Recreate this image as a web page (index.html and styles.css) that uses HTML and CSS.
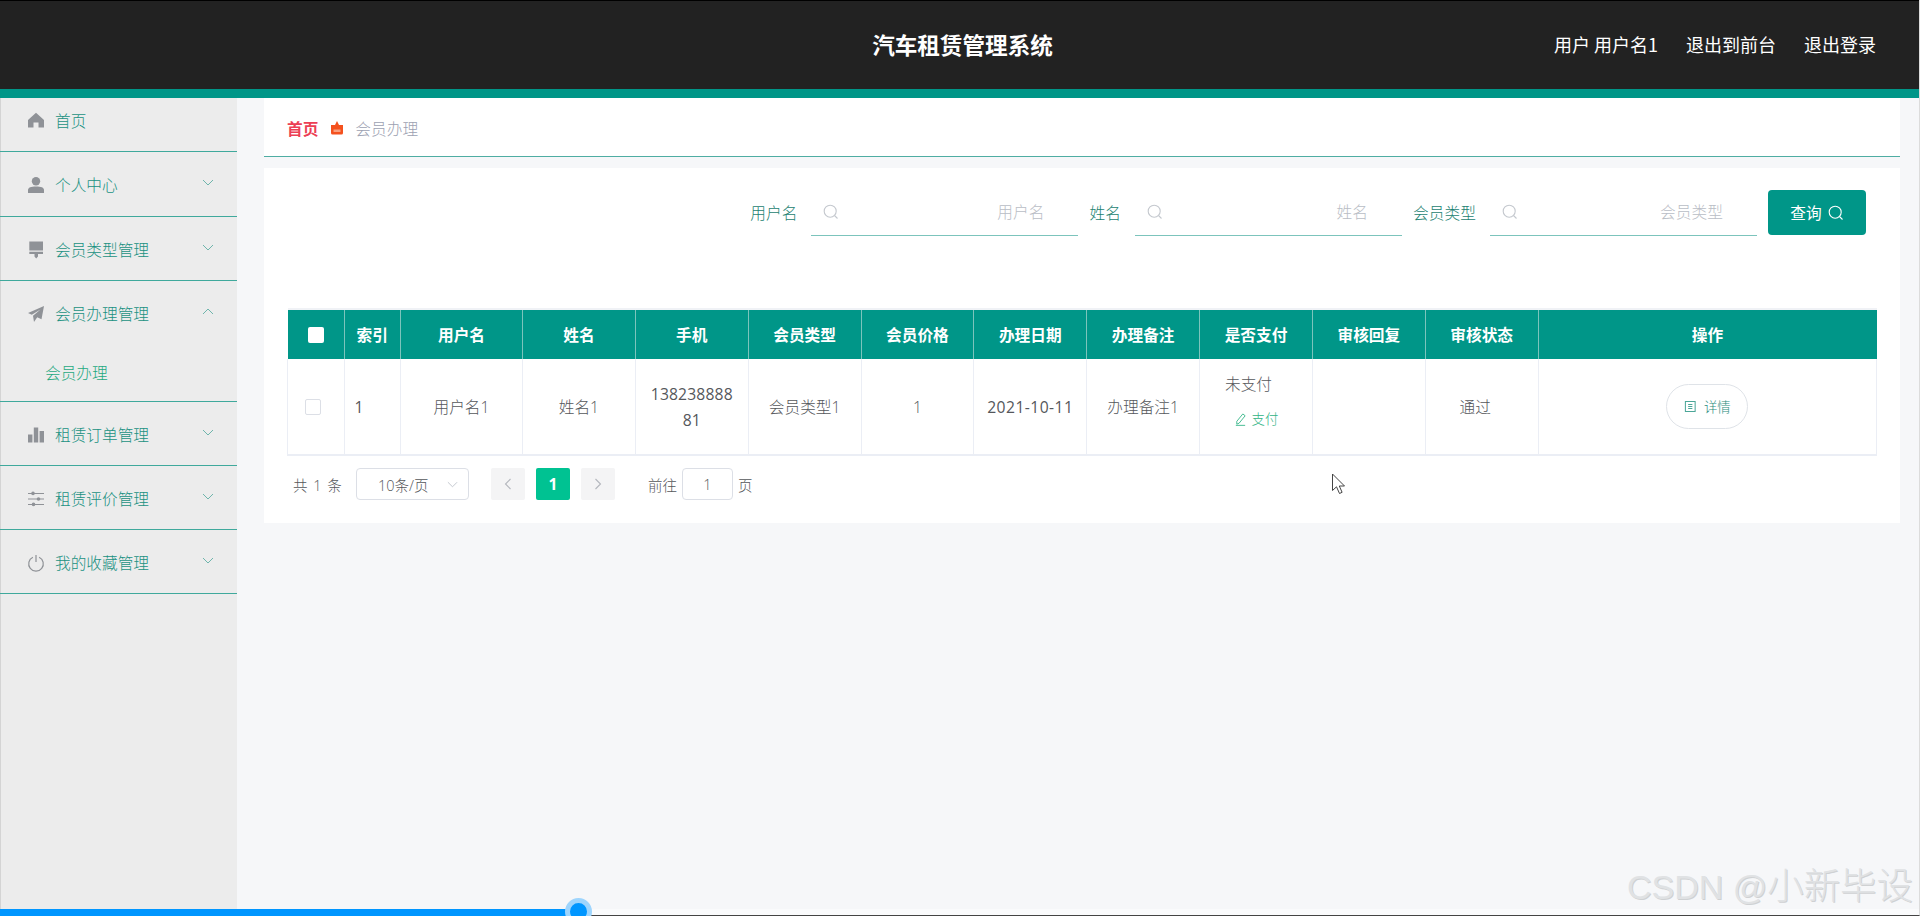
FILE: index.html
```html
<!DOCTYPE html>
<html lang="zh-CN">
<head>
<meta charset="utf-8">
<title>汽车租赁管理系统</title>
<link rel="stylesheet" href="styles.css">
</head>
<body>
<div class="app">
  <header class="topbar">
    <div class="title">汽车租赁管理系统</div>
    <nav class="top-links">
      <span>用户 用户名1</span>
      <span>退出到前台</span>
      <span>退出登录</span>
    </nav>
  </header>
  <div class="body-row">
    <aside class="sidebar">
      <div class="menu-item menu-home">
        <div class="menu-title">
          <svg class="menu-icon" viewBox="0 0 16 16"><path d="M8 0.8 L16 8 V15.5 H10.5 V10.5 H5.5 V15.5 H0 V8 Z"/></svg>
          <span>首页</span>
        </div>
      </div>
      <div class="menu-item menu-tall">
        <div class="menu-title">
          <svg class="menu-icon" viewBox="0 0 16 16"><circle cx="8" cy="4.2" r="4.2"/><path d="M0 16 V13 C0 10.5 3 9.5 8 9.5 C13 9.5 16 10.5 16 13 V16 Z"/></svg>
          <span>个人中心</span>
          <svg class="chev" viewBox="0 0 12 7"><path d="M1 1 L6 6 L11 1"/></svg>
        </div>
      </div>
      <div class="menu-item">
        <div class="menu-title">
          <svg class="menu-icon" viewBox="0 0 16 16"><path d="M1.3 -0.5 H15 V8.5 H1.3 Z M1.3 9.8 H15 V12 H10 V14.5 L8.2 16.5 L6.5 14.5 V12 H1.3 Z"/></svg>
          <span>会员类型管理</span>
          <svg class="chev" viewBox="0 0 12 7"><path d="M1 1 L6 6 L11 1"/></svg>
        </div>
      </div>
      <div class="menu-item">
        <div class="menu-title">
          <svg class="menu-icon" viewBox="0 0 16 16"><path d="M16 0 L13.5 13.2 L9.2 11.2 L6 16 L5 9.8 L12.5 3.5 L3.8 8.8 L0 7 Z"/></svg>
          <span>会员办理管理</span>
          <svg class="chev" viewBox="0 0 12 7"><path d="M1 6 L6 1 L11 6"/></svg>
        </div>
        <div class="submenu">会员办理</div>
      </div>
      <div class="menu-item">
        <div class="menu-title">
          <svg class="menu-icon" viewBox="0 0 16 16"><path d="M0 7.5 H4.4 V15.5 H0 Z M5.8 0.5 H10.2 V15.5 H5.8 Z M11.6 4 H16 V15.5 H11.6 Z"/></svg>
          <span>租赁订单管理</span>
          <svg class="chev" viewBox="0 0 12 7"><path d="M1 1 L6 6 L11 1"/></svg>
        </div>
      </div>
      <div class="menu-item">
        <div class="menu-title">
          <svg class="menu-icon" viewBox="0 0 16 16"><path d="M0 1.9 H16 V3 H0 Z M0 7.4 H16 V8.5 H0 Z M0 12.9 H16 V14 H0 Z"/><circle cx="5" cy="2.4" r="1.8"/><circle cx="10.5" cy="8" r="1.8"/><circle cx="5.5" cy="13.4" r="1.8"/></svg>
          <span>租赁评价管理</span>
          <svg class="chev" viewBox="0 0 12 7"><path d="M1 1 L6 6 L11 1"/></svg>
        </div>
      </div>
      <div class="menu-item">
        <div class="menu-title">
          <svg class="menu-icon" viewBox="0 0 16 16"><path class="power" d="M4.9 2.2 A7.3 7.3 0 1 0 11.1 2.2 M8 0 V7"/></svg>
          <span>我的收藏管理</span>
          <svg class="chev" viewBox="0 0 12 7"><path d="M1 1 L6 6 L11 1"/></svg>
        </div>
      </div>
    </aside>
    <main class="content">
      <div class="crumbs">
        <span class="crumb-home">首页</span>
        <svg class="crumb-icon" viewBox="0 0 14 14"><path d="M7 0 L9 4 H13 V12 Q13 13.5 11.5 13.5 H2.5 Q1 13.5 1 12 V4 H5 Z"/><path class="crumb-mark" d="M3.5 8.5 H10.5 V11 H3.5 Z"/></svg>
        <span class="crumb-page">会员办理</span>
      </div>
      <section class="card">
        <form class="search">
          <label class="s-label">用户名</label>
          <div class="s-input">
            <svg class="s-icon" viewBox="0 0 16 16"><circle cx="7.2" cy="7.2" r="6"/><path d="M11.5 11.5 L14.5 14.5"/></svg>
            <span class="s-ph">用户名</span>
          </div>
          <label class="s-label">姓名</label>
          <div class="s-input">
            <svg class="s-icon" viewBox="0 0 16 16"><circle cx="7.2" cy="7.2" r="6"/><path d="M11.5 11.5 L14.5 14.5"/></svg>
            <span class="s-ph">姓名</span>
          </div>
          <label class="s-label">会员类型</label>
          <div class="s-input">
            <svg class="s-icon" viewBox="0 0 16 16"><circle cx="7.2" cy="7.2" r="6"/><path d="M11.5 11.5 L14.5 14.5"/></svg>
            <span class="s-ph">会员类型</span>
          </div>
          <button class="s-btn" type="button">查询
            <svg class="s-btn-icon" viewBox="0 0 16 16"><circle cx="7.2" cy="7.2" r="6"/><path d="M11.5 11.5 L14.5 14.5"/></svg>
          </button>
        </form>
        <table class="grid">
          <colgroup>
            <col class="c-check"><col class="c-index"><col class="c-user"><col class="c-std"><col class="c-std"><col class="c-std"><col class="c-std"><col class="c-std"><col class="c-std"><col class="c-std"><col class="c-std"><col class="c-std"><col>
          </colgroup>
          <thead>
            <tr>
              <th><span class="check check-head"></span></th>
              <th>索引</th><th>用户名</th><th>姓名</th><th>手机</th><th>会员类型</th><th>会员价格</th><th>办理日期</th><th>办理备注</th><th>是否支付</th><th>审核回复</th><th>审核状态</th><th>操作</th>
            </tr>
          </thead>
          <tbody>
            <tr>
              <td><span class="check check-body"></span></td>
              <td class="left">1</td>
              <td>用户名1</td>
              <td>姓名1</td>
              <td class="wrap">13823888881</td>
              <td>会员类型1</td>
              <td>1</td>
              <td class="nums">2021-10-11</td>
              <td>办理备注1</td>
              <td>
                <div class="unpaid">未支付</div>
                <div class="pay">
                  <svg class="pay-icon" viewBox="0 0 14 14"><path d="M9.5 1 L12 3 L5.5 11 L3 12 L3 9 Z M2 13.3 H12"/></svg>支付
                </div>
              </td>
              <td></td>
              <td><span class="status">通过</span></td>
              <td>
                <span class="detail">
                  <svg class="detail-icon" viewBox="0 0 14 14"><path d="M1.5 1.5 H12 V12.5 H1.5 Z M4.5 4.8 H9 M4.5 7 H9 M4.5 9.2 H9"/></svg>详情
                </span>
              </td>
            </tr>
          </tbody>
        </table>
        <div class="pager">
          <span class="total">共 1 条</span>
          <span class="size">10条/页
            <svg class="size-chev" viewBox="0 0 12 7"><path d="M1 1 L6 6 L11 1"/></svg>
          </span>
          <span class="pbtn pbtn-prev"><svg viewBox="0 0 8 12"><path d="M6.5 1 L1.5 6 L6.5 11"/></svg></span>
          <span class="pnum">1</span>
          <span class="pbtn"><svg viewBox="0 0 8 12"><path d="M1.5 1 L6.5 6 L1.5 11"/></svg></span>
          <span class="goto">前往</span>
          <span class="jump">1</span>
          <span class="page-word">页</span>
        </div>
      </section>
    </main>
  </div>
</div>
<div class="watermark">CSDN @<span class="wm-cjk">小新毕设</span></div>
<svg class="cursor" viewBox="0 0 14 22"><path d="M1 1 V17.5 L5 13.8 L8 20.5 L10.6 19.3 L7.8 13 H13 Z"/></svg>
<div class="track"></div>
<div class="progress"></div>
<div class="thumb"></div>
</body>
</html>
```
FILE: styles.css
```css
* { box-sizing: border-box; }
html, body { margin: 0; padding: 0; height: 100%; overflow: hidden; }
body {
  font-family: "Noto Sans CJK SC", "Noto Sans", sans-serif;
  font-size: 15.68px;
  font-weight: 300;
  color: #55575b;
  background: #f6f7f9;
}
.app {
  height: 916px;
  display: flex;
  flex-direction: column;
  border-bottom: 1px solid #444;
  border-right: 1px solid #dcdcdc;
}
.topbar {
  height: 98px;
  flex: none;
  background: #222;
  border-top: 1px solid #000;
  border-bottom: 9px solid #009688;
  display: flex;
  align-items: center;
  justify-content: center;
  padding-bottom: 2px;
  position: relative;
}
.title { font-size: 22.6px; font-weight: 700; color: #fff; padding-left: 6px; }
.top-links {
  position: absolute;
  right: 43px;
  top: 29px;
  display: flex;
  gap: 28px;
  font-size: 18px;
  font-weight: 400;
  line-height: 28px;
  color: #fff;
}
.body-row { flex: 1; display: flex; min-height: 0; }
.sidebar {
  width: 237px;
  flex: none;
  background: #ececec;
  border-left: 1px solid #d4d4d4;
}
.menu-item { border-bottom: 1px solid #3fa99c; margin-left: -1px; }
.menu-title {
  height: 63px;
  display: flex;
  align-items: center;
  padding: 2px 0 0 28px;
  color: #1a9182;
}
.menu-home .menu-title { height: 53px; padding-top: 0; padding-bottom: 9px; }
.menu-tall .menu-title { height: 64px; padding-top: 1px; }
.menu-icon { width: 16px; height: 16px; fill: #8f9297; margin-right: 11px; flex: none; overflow: visible; }
.power { fill: none; stroke: #8f9297; stroke-width: 1.2; }
.chev {
  width: 12px;
  height: 7px;
  margin: 0 23px 5px auto;
  fill: none;
  stroke: #6fb5ac;
  stroke-width: 1;
}
.submenu {
  height: 57px;
  padding: 0 0 0 45px;
  line-height: 58px;
  color: #1ea97f;
}
.content { flex: 1; min-width: 0; padding: 0 19px 0 27px; }
.crumbs {
  height: 59px;
  background: #fff;
  border-bottom: 1px solid #4fada3;
  display: flex;
  align-items: center;
  padding: 2px 0 0 23px;
  margin-bottom: 11px;
}
.crumb-home { font-weight: 700; color: #ec3f55; }
.crumb-icon { width: 14px; height: 14px; margin: 0 11px 0 12px; fill: #f4511e; }
.crumb-mark { fill: #f9a07f; }
.crumb-page { color: #9ca1b1; }
.card { background: #fff; height: 355px; padding: 0 24px; }
.search {
  height: 142px;
  display: flex;
  align-items: flex-start;
  justify-content: flex-end;
  padding: 22px 10px 0 0;
}
.s-label {
  line-height: 45px;
  color: #1c8271;
  margin-right: 14px;
}
.s-input {
  width: 267px;
  height: 46px;
  border-bottom: 1px solid #7cc4bc;
  display: flex;
  align-items: center;
  justify-content: space-between;
  padding: 0 34px 2px 12px;
  margin-right: 11.2px;
}
.s-icon { width: 16px; height: 16px; fill: none; stroke: #c4c8ce; stroke-width: 1.1; }
.s-ph { color: #b9bdc5; }
.s-btn {
  width: 98px;
  height: 45px;
  border: 0;
  border-radius: 4px;
  background: #009688;
  color: #fff;
  font: inherit;
  font-weight: 400;
  display: flex;
  align-items: center;
  justify-content: center;
  gap: 6px;
  padding: 0;
}
.s-btn-icon { width: 16px; height: 16px; fill: none; stroke: #fff; stroke-width: 1.1; }
.grid {
  width: 1590px;
  margin: -2px 0 0 -1px;
  table-layout: fixed;
  border-collapse: collapse;
  border-top: 2px solid #f0f2f6;
}
.c-check { width: 56.5px; }
.c-index { width: 56.5px; }
.c-user { width: 122px; }
.c-std { width: 112.85px; }
.grid th {
  height: 50px;
  background: #009688;
  color: #fff;
  font-weight: 700;
  padding: 0;
  text-align: center;
  border-left: 1px solid #7cc4bc;
}
.grid th:first-child { border-left: 0; }
.grid td {
  height: 96px;
  padding: 0 13px;
  text-align: center;
  border-left: 1px solid #ebeef5;
  border-right: 1px solid #ebeef5;
  border-bottom: 2px solid #ebeef5;
  line-height: 28px;
  font-family: "Open Sans", "Noto Sans CJK SC", sans-serif;
}
.grid td.left { text-align: left; padding-left: 10px; font-weight: 400; }
.grid td.wrap { word-break: break-all; letter-spacing: 0.15px; padding: 0 12px; line-height: 26px; font-weight: 400; }
.grid td.nums { letter-spacing: 0.45px; padding: 0; font-weight: 400; }
.check { display: block; width: 16px; height: 16px; border-radius: 2px; }
.check-head { background: #fff; margin: 0 auto; }
.check-body { border: 1px solid #dcdfe6; margin: 0 0 0 4px; }
.unpaid { margin: 0 15px 11px 0; }
.pay {
  font-size: 13.4px;
  line-height: 20px;
  color: #2fb384;
  display: flex;
  align-items: center;
  justify-content: center;
  gap: 5px;
  margin-bottom: 14px;
}
.pay-icon { width: 13px; height: 13px; fill: none; stroke: #3cb98d; stroke-width: 1; }
.status { margin-right: 13px; }
.detail {
  display: inline-flex;
  align-items: center;
  justify-content: center;
  gap: 7px;
  width: 82px;
  height: 45px;
  border: 1px solid #dfe3e8;
  border-radius: 23px;
  font-size: 13.4px;
  color: #2a8c7d;
}
.detail-icon { width: 13px; height: 13px; fill: none; stroke: #4ba698; stroke-width: 1.1; }
.pager {
  display: flex;
  align-items: center;
  height: 32px;
  margin-top: 12px;
  padding-left: 4px;
  font-family: "Open Sans", "Noto Sans CJK SC", sans-serif;
  font-size: 14.5px;
}
.total { width: 64px; word-spacing: 2px; padding-left: 1px; }
.size {
  width: 113px;
  height: 32px;
  border: 1px solid #dcdfe6;
  border-radius: 4px;
  display: flex;
  align-items: center;
  padding-left: 21px;
  justify-content: space-between;
  padding-right: 10px;
  margin-right: 22px;
}
.size-chev { width: 11px; height: 7px; fill: none; stroke: #c0c4cc; stroke-width: 1; }
.pbtn {
  width: 34px;
  height: 32px;
  background: #f4f4f5;
  border-radius: 2px;
  display: flex;
  align-items: center;
  justify-content: center;
}
.pbtn svg { width: 8px; height: 12px; fill: none; stroke: #b4b7bd; stroke-width: 1.1; }
.pnum {
  width: 34px;
  height: 32px;
  margin: 0 11px;
  background: #00c292;
  border-radius: 2px;
  color: #fff;
  font-size: 15.68px;
  font-weight: 700;
  display: flex;
  align-items: center;
  justify-content: center;
}
.goto { margin-left: 33px; }
.jump {
  width: 51px;
  height: 32px;
  margin: 0 5px;
  border: 1px solid #dcdfe6;
  border-radius: 4px;
  display: flex;
  align-items: center;
  justify-content: center;
}
.watermark {
  position: absolute;
  left: 1627px;
  top: 859px;
  font-family: "Liberation Sans", "Noto Sans CJK SC", sans-serif;
  font-size: 34px;
  font-weight: 400;
  line-height: 48px;
  color: #e0e2e4;
  text-shadow: 1px 1px 0 #cfd1d3;
  white-space: nowrap;
}
.wm-cjk { font-family: "Noto Sans CJK SC", sans-serif; font-size: 36.4px; font-weight: 300; }
.cursor { position: absolute; left: 1331px; top: 473px; width: 15px; height: 22px; fill: #fff; stroke: #444; stroke-width: 1; }
.track { position: absolute; left: 0; top: 909px; width: 1919px; height: 6px; background: #fafbfc; }
.progress { position: absolute; left: 0; top: 909px; width: 578px; height: 7px; background: #0096ff; }
.thumb {
  position: absolute;
  left: 565px;
  top: 898px;
  width: 27px;
  height: 27px;
  border-radius: 50%;
  background: #0096ff;
  border: 5px solid #9ed5fd;
  clip-path: inset(0 0 9px 0);
}
```
